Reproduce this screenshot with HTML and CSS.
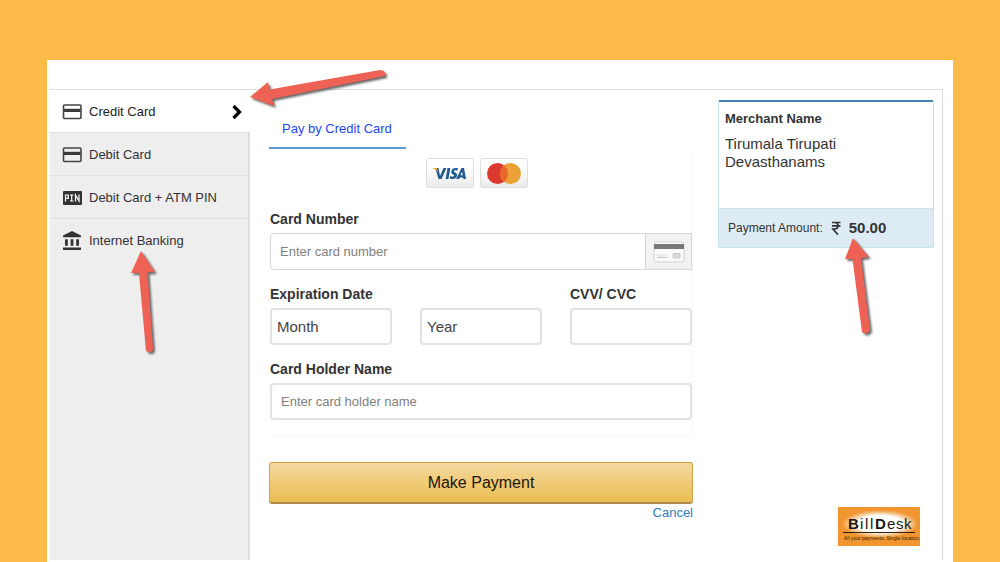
FILE: index.html
```html
<!DOCTYPE html>
<html lang="en">
<head>
<meta charset="utf-8">
<meta name="viewport" content="width=device-width, initial-scale=1">
<title>Make Payment</title>
<link rel="stylesheet" href="styles.css">
</head>
<body>
<main class="sheet">
  <div class="frame">
    <nav class="menu" aria-label="Payment methods">
      <a class="menu-item active" href="#credit">
        <svg class="icon" viewBox="0 0 20 20" aria-hidden="true"><rect x="1.5" y="3" width="17.5" height="13.5" rx="1" fill="#fff" stroke="#444" stroke-width="1.6"/><path d="M2 6.8h16.500v3.200H2z" fill="#3a3a3a"/></svg>
        <span>Credit Card</span>
        <svg class="chevron" viewBox="0 0 10 16" aria-hidden="true"><path d="M1.5 2l6 6-6 6" fill="none" stroke="#000" stroke-width="3.2"/></svg>
        <svg class="arrow arrow-credit" viewBox="0 0 140 42" aria-hidden="true"><path d="M2 30L20 15L21.500 22.500L132 3Q138 3 137 9L24 32L26 39Z"/></svg>
      </a>
      <a class="menu-item" href="#debit">
        <svg class="icon" viewBox="0 0 20 20" aria-hidden="true"><rect x="1.5" y="3" width="17.5" height="13.5" rx="1" fill="#eee" stroke="#444" stroke-width="1.6"/><path d="M2 6.8h16.500v3.200H2z" fill="#3a3a3a"/></svg>
        <span>Debit Card</span>
      </a>
      <a class="menu-item" href="#atm">
        <svg class="icon" viewBox="0 0 20 20" aria-hidden="true"><rect x="1" y="3" width="19" height="14" rx="1" fill="#333"/><path d="M3.500 13.500V7h2.800v3.300H3.500M8 7h3.400M9.700 7v6M8 13h3.400M13.500 13.500V7l3.500 6V6.500" fill="none" stroke="#fff" stroke-width="1.200"/></svg>
        <span>Debit Card + ATM PIN</span>
      </a>
      <a class="menu-item" href="#bank">
        <svg class="icon" viewBox="0 0 20 20" aria-hidden="true"><path d="M10 0l9 4.500v1.800H1V4.500zM3 8.300h2.800v6.500H3zM8.600 8.300h2.800v6.500H8.600zM14.200 8.300H17v6.500h-2.800zM1 16.500h18v2.500H1z" fill="#333"/></svg>
        <span>Internet Banking</span>
        <svg class="arrow arrow-bank" viewBox="0 0 34 112" aria-hidden="true"><path d="M12 2L26 23L18.500 23.500L24 100Q23 105 17 102L10 24L2 24Z"/></svg>
      </a>
    </nav>

    <form class="payment">
      <a class="tab" href="#credit">Pay by Credit Card</a>
      <div class="panel">
        <div class="brands">
          <svg class="brand" viewBox="0 0 48 30" role="img" aria-label="Visa">
            <defs><linearGradient id="tile" x1="0" y1="0" x2="0" y2="1"><stop offset="0.300" stop-color="#fff"/><stop offset="1" stop-color="#eaeaea"/></linearGradient></defs>
            <rect x="0.500" y="0.500" width="47" height="29" rx="2" fill="url(#tile)" stroke="#dedede"/>
            <path d="M11 10h3.500l1.500 8 3.500-8h3L17.500 21H14.500L12 12.500z M23.500 10h2.800L24.500 21h-2.800z M34 10.400l-.5 2.400c-1.700-.8-3.500-.5-3.500.4 0 1.200 3.400 1.500 3.100 4.300-.3 3.400-4.400 4.200-7.300 3l.5-2.500c2 1 3.900.8 4-.2.100-1.300-3.400-1.500-3-4.400.4-3.200 4-4 6.700-3z M37.500 10h2.500l2 11h-2.600l-.3-1.600h-3.300l-.8 1.600h-2.800z M38 13.500l-1.500 3.700h2.200z" fill="#20598f" fill-rule="evenodd" transform="translate(-2 0)"/>
            <path d="M6.500 10h4.500l1.500 5c-1.200-2.300-3-3.800-6-4.700z" fill="#e9a533"/>
          </svg>
          <svg class="brand" viewBox="0 0 48 30" role="img" aria-label="Mastercard">
            <rect x="0.500" y="0.500" width="47" height="29" rx="2" fill="url(#tile)" stroke="#dedede"/>
            <circle cx="17.500" cy="15.500" r="10.500" fill="#db392f"/><circle cx="30.500" cy="15.500" r="10.500" fill="#eca137"/><path d="M24 7.250a10.500 10.500 0 0 1 0 16.500a10.500 10.500 0 0 1 0-16.500z" fill="#ea672b"/>
          </svg>
        </div>

        <div class="field">
          <label for="number">Card Number</label>
          <div class="input-group">
            <input class="control" id="number" type="text" placeholder="Enter card number">
            <span class="addon">
              <svg class="card-back" viewBox="0 0 32 22" aria-hidden="true"><rect x="1" y="1" width="30" height="20" rx="2" fill="#fafafa" stroke="#d2d2d2"/><path d="M1 3h30v5H1z" fill="#777"/><path d="M4 14.500q1-2 2 0t2 0 2 0 2 0 2 0M4 16.500h11" fill="none" stroke="#ccc"/><rect x="20" y="12.500" width="7" height="4.500" rx="1" fill="#ddd" stroke="#c5c5c5"/></svg>
            </span>
          </div>
        </div>

        <div class="row">
          <div class="field">
            <label for="month">Expiration Date</label>
            <select class="control select" id="month"><option>Month</option></select>
          </div>
          <div class="field">
            <select class="control select" aria-label="Expiration year"><option>Year</option></select>
          </div>
          <div class="field">
            <label for="cvv">CVV/ CVC</label>
            <input class="control" id="cvv" type="text">
          </div>
        </div>

        <div class="field">
          <label for="holder">Card Holder Name</label>
          <input class="control" id="holder" type="text" placeholder="Enter card holder name">
        </div>
      </div>
      <button class="pay" type="button">Make Payment</button>
      <a class="cancel" href="#cancel">Cancel</a>
    </form>

    <aside class="side">
      <section class="summary">
        <div class="merchant">
          <h2>Merchant Name</h2>
          <p>Tirumala Tirupati Devasthanams</p>
        </div>
        <div class="amount">
          <span>Payment Amount:</span>
          <svg class="rupee" viewBox="0 0 10 14" aria-hidden="true"><path d="M1 1.500h8.500M1 4.800h8.500M1.500 1.500h2q3.500 0 3.500 3.200T3.500 8H1.800L7 13.500" fill="none" stroke="#333" stroke-width="1.700"/></svg>
          <strong>50.00</strong>
          <svg class="arrow arrow-amount" viewBox="0 0 34 106" aria-hidden="true"><path d="M10 3L26 22L18 23L27 95Q24 101 19 97L9.500 24L2 24Z"/></svg>
        </div>
      </section>
      <svg class="billdesk" viewBox="0 0 82 39" role="img" aria-label="BillDesk">
        <defs><radialGradient id="glow"><stop offset="0.600" stop-color="#fff"/><stop offset="1" stop-color="#f0952f"/></radialGradient></defs>
        <rect width="82" height="39" fill="#f0952f"/>
        <ellipse cx="42" cy="17" rx="38" ry="14" fill="url(#glow)"/>
        <g class="logo-name">
          <text x="10" y="22" class="logo-strong">B</text><text x="22" y="22">i</text><text x="27" y="22">l</text><text x="32" y="22">l</text><text x="37" y="22" class="logo-strong">D</text><text x="49" y="22">e</text><text x="58" y="22">s</text><text x="66" y="22">k</text>
        </g>
        <path d="M5 25.500h72" stroke="#30200c" stroke-width="1"/>
        <text x="6" y="33" class="logo-tag">All your payments. Single location.</text>
      </svg>
    </aside>
  </div>
</main>
</body>
</html>
```
FILE: styles.css
```css
* {
  box-sizing: border-box;
}

body {
  margin: 0;
  padding: 60px 47px 0;
  min-height: 100vh;
  display: flex;
  background: #ffbb49;
  color: #333;
  font: 13px/20px "Liberation Sans", Arial, sans-serif;
}

.sheet {
  flex: 1;
  display: flex;
  padding: 29px 10px 2px 3px;
  background: #fff;
}

.frame {
  flex: 1;
  display: flex;
  border-top: 1px solid #dcdcdc;
  border-right: 1px solid #dcdcdc;
}

a {
  text-decoration: none;
}

/* Payment method menu */
.menu {
  width: 200px;
  background: #eee;
  box-shadow: inset -2px 0 0 #dedede;
}

.menu-item {
  position: relative;
  display: flex;
  align-items: center;
  gap: 7px;
  height: 43px;
  padding: 2px 8px 0 12px;
  border-bottom: 1px solid #e0e0e0;
  color: #333;
}

.menu-item:last-child {
  padding-top: 0;
  border-bottom: 0;
}

.menu-item.active {
  background: #fff;
  color: #222;
}

.icon {
  width: 20px;
  height: 20px;
}

.chevron {
  width: 10px;
  height: 16px;
  margin-left: auto;
}

/* Pointer arrows laid over the page */
.arrow {
  position: absolute;
  z-index: 1;
  overflow: visible;
  fill: #ee6155;
  filter: drop-shadow(2px 2px 1px #666);
  pointer-events: none;
}

.arrow-credit {
  width: 140px;
  left: 198px;
  top: -23px;
}

.arrow-bank {
  width: 34px;
  left: 79px;
  top: 30px;
}

.arrow-amount {
  width: 34px;
  left: 124px;
  top: 26px;
}

/* Card form */
.payment {
  flex: 1;
  display: flex;
  flex-direction: column;
  padding: 18px 25px 0 19px;
}

.tab {
  align-self: flex-start;
  padding: 11px 14px 8px 13px;
  border-bottom: 2px solid #5f9bd0;
  color: #1f45f0;
}

.panel {
  display: flex;
  flex-direction: column;
  gap: 14px;
  padding: 9px 0 15px 1px;
  border: solid #f8f8f8;
  border-width: 0 1px 1px 0;
}

.brands {
  display: flex;
  justify-content: center;
  gap: 6px;
  padding: 0 8px 7px 0;
}

.brand {
  width: 48px;
  height: 30px;
}

.field {
  display: flex;
  flex-direction: column;
  justify-content: flex-end;
  gap: 4px;
  min-width: 0;
}

.field label {
  font-size: 14px;
  font-weight: bold;
  line-height: 20px;
}

.row {
  display: grid;
  grid-template-columns: 1fr 1fr 1fr;
  gap: 28px;
}

.control {
  width: 100%;
  height: 37px;
  padding: 0 9px;
  border: 2px solid #e2e2e2;
  border-radius: 4px;
  background: #fff;
  color: #444;
  font: inherit;
}

.control::placeholder {
  color: #808080;
  opacity: 1;
}

.select {
  appearance: none;
  padding: 0 5px;
  font-size: 15px;
}

.input-group {
  display: flex;
}

.input-group .control {
  flex: 1;
  border-width: 1px;
  border-color: #d6d6d6;
  border-radius: 4px 0 0 4px;
}

.addon {
  display: grid;
  place-items: center;
  width: 46px;
  border: 1px solid #d6d6d6;
  border-left: 0;
  background: #f2f2f2;
}

.card-back {
  width: 32px;
  height: 22px;
}

.pay {
  height: 42px;
  margin-top: 26px;
  border: 1px solid #cda349;
  border-bottom: 2px solid #b18c48;
  border-radius: 3px;
  background: linear-gradient(#f5d89f, #eabd51);
  color: #1d1607;
  font: 16px/20px "Liberation Sans", Arial, sans-serif;
}

.cancel {
  align-self: flex-end;
  line-height: 18px;
  color: #337ab7;
}

/* Merchant summary */
.side {
  display: flex;
  flex-direction: column;
  justify-content: space-between;
  align-items: flex-end;
  width: 224px;
  padding: 10px 8px 14px 0;
}

.summary {
  width: 100%;
  border: 1px solid #c5e3ea;
  border-top: 2px solid #3f83b5;
  border-radius: 2px;
}

.merchant {
  min-height: 106px;
  padding: 7px 6px;
}

.merchant h2 {
  margin: 0 0 6px;
  font-size: 13px;
  line-height: 20px;
}

.merchant p {
  width: 130px;
  margin: 0;
  font-size: 15px;
  line-height: 18px;
}

.amount {
  position: relative;
  display: flex;
  align-items: center;
  gap: 8px;
  height: 39px;
  padding: 0 9px;
  border-top: 1px solid #cfe1e9;
  background: #dcebf4;
  font-size: 12px;
}

.amount strong {
  font-size: 15px;
}

.rupee {
  width: 10px;
  height: 14px;
}

.billdesk {
  width: 82px;
  height: 39px;
  margin-right: 14px;
}

.logo-name {
  fill: #1c1712;
  font-size: 15px;
}

.logo-strong {
  font-weight: bold;
}

.logo-tag {
  fill: #3a2208;
  font-size: 5px;
  font-family: "Liberation Sans", Arial, sans-serif;
}
```
